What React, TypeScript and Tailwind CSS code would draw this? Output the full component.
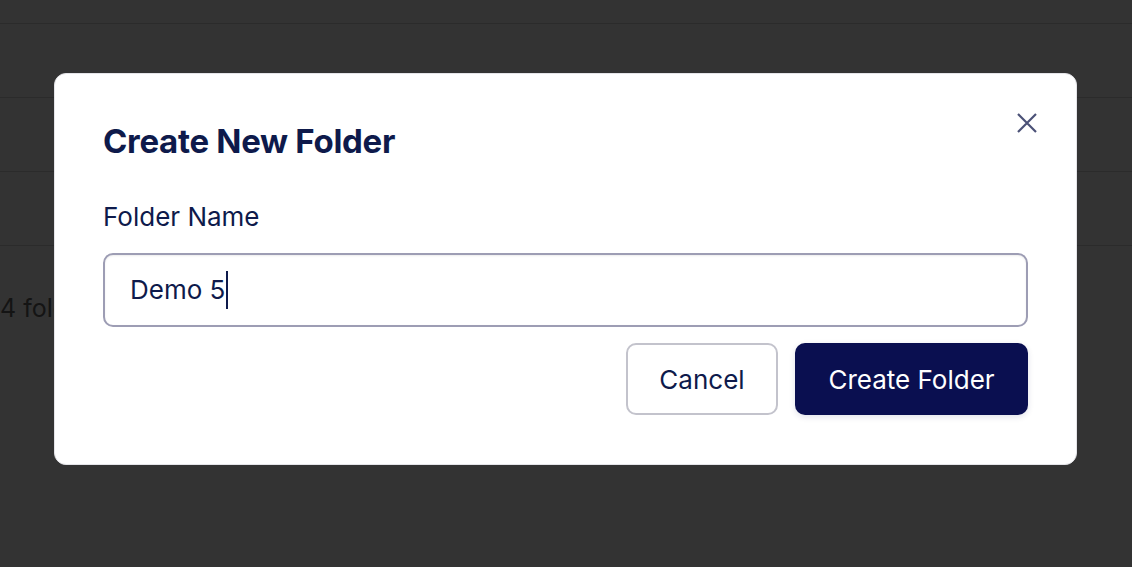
const rows = ["Demo 1", "Demo 2", "Demo 3"];

export default function App() {
  return (
    <div className="relative h-[567px] w-[1132px] overflow-hidden bg-[#333333] font-['Inter',sans-serif]">
      {/* dimmed page behind the dialog */}
      <div className="h-[24px] border-b border-[#2b2b2b]" />
      {rows.map((r) => (
        <div key={r} className="h-[74px] border-b border-[#2b2b2b]" />
      ))}
      <div className="pt-[48px] text-[25px] leading-[28px] text-[#141414]">4 folders</div>

      {/* dialog */}
      <div className="absolute left-[54px] top-[73px] h-[392px] w-[1023px] rounded-[12px] border border-[#e4e4e8] bg-white px-[48px] pt-[47px]">
        <button className="absolute right-[39px] top-[39px] text-[#4b5177]">
          <svg width="20" height="20" viewBox="0 0 20 20" fill="none" stroke="currentColor" strokeWidth="2.2">
            <path d="M1 1L19 19M19 1L1 19" />
          </svg>
        </button>
        <h2 className="text-[33px] font-bold leading-[40px] tracking-[-0.3px] text-[#0e1a4b]">
          Create New Folder
        </h2>
        <label className="mt-[40px] block text-[26px] leading-[32px] text-[#0e1a4b]">Folder Name</label>
        <div className="mt-[20px] flex h-[74px] items-center rounded-[10px] border-2 border-[#9d9db4] px-[25px] shadow-[inset_0_1px_2px_rgba(0,0,0,0.08)]">
          <span className="text-[26px] leading-[32px] text-[#0e1a4b]">Demo 5</span>
          <span className="ml-[1px] h-[38px] w-[2px] bg-[#0e1a4b]" />
        </div>
        <div className="mt-[16px] flex justify-end gap-[17px]">
          <button className="h-[72px] w-[152px] rounded-[10px] border-2 border-[#c3c3cc] text-[26px] text-[#0e1a4b]">
            Cancel
          </button>
          <button className="h-[72px] w-[233px] rounded-[10px] bg-[#0a0f50] text-[26px] text-white shadow-[0_2px_6px_rgba(10,15,80,0.12)]">
            Create Folder
          </button>
        </div>
      </div>
    </div>
  );
}
